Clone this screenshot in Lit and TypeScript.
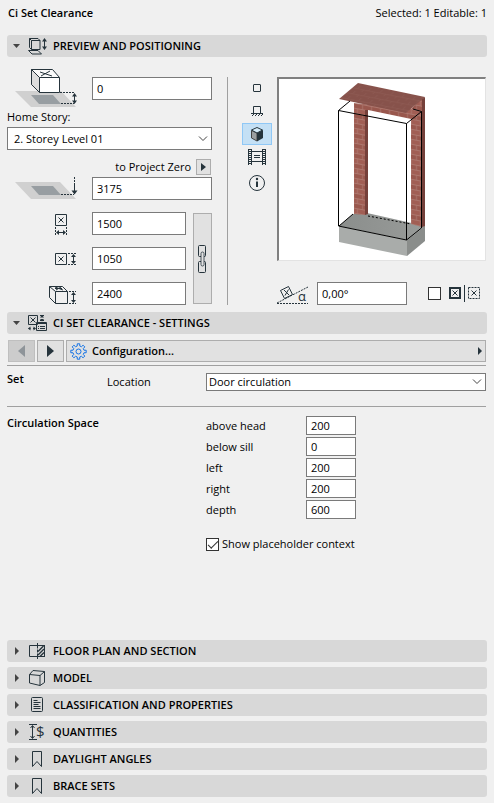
import { LitElement, html, svg, css, TemplateResult } from "lit";
import { customElement, property } from "lit/decorators.js";

/** Outline of a cog wheel: `teeth` teeth between an inner and an outer radius. */
function gearPath(cx: number, cy: number, inner: number, outer: number, teeth: number): string {
  const step = (Math.PI * 2) / teeth;
  const at = (r: number, a: number) =>
    `${(cx + r * Math.cos(a)).toFixed(2)} ${(cy + r * Math.sin(a)).toFixed(2)}`;
  const points: string[] = [];
  for (let i = 0; i < teeth; i++) {
    const a = i * step - Math.PI / 2;
    points.push(at(inner, a - step * 0.3), at(outer, a - step * 0.2));
    points.push(at(outer, a + step * 0.2), at(inner, a + step * 0.3));
  }
  return `M${points.join("L")}Z`;
}

const iconCss = css`
  svg {
    display: block;
    flex: none;
    overflow: visible;
    fill: none;
    stroke: #26343c;
    stroke-width: 1;
  }
  .solid {
    fill: #26343c;
    stroke: none;
  }
  .glyph {
    fill: #26343c;
    stroke: none;
    font-family: "Open Sans", sans-serif;
    font-weight: 400;
  }
  .dash {
    stroke-dasharray: 2 1;
  }
`;

const controlCss = css`
  * {
    box-sizing: border-box;
  }
  input,
  select,
  button {
    font: inherit;
    color: inherit;
    margin: 0;
    border-radius: 0;
  }
  input[type="text"] {
    height: 23px;
    min-width: 0;
    padding: 0 4px;
    border: 1px solid #7a7a7a;
    background: #fff;
  }
  input[type="checkbox"] {
    appearance: none;
    flex: none;
    width: 13px;
    height: 13px;
    border: 1px solid #333;
    background: #fff;
    display: grid;
    place-items: center;
  }
  input[type="checkbox"]:checked::before {
    content: "";
    width: 9px;
    height: 4px;
    border: solid #333;
    border-width: 0 0 1px 1px;
    transform: translateY(-1px) rotate(-45deg);
  }
  .combo {
    display: grid;
    align-items: center;
  }
  .combo > * {
    grid-area: 1 / 1;
  }
  .combo svg {
    justify-self: end;
    margin-right: 4px;
    pointer-events: none;
    stroke: #444;
  }
  select {
    appearance: none;
    width: 100%;
    border: 1px solid #7a7a7a;
    background: #fff;
  }
  button {
    padding: 0;
    border: 1px solid #adadad;
    background: #e1e1e1;
    display: flex;
    align-items: center;
    justify-content: center;
  }
`;

const chevron = html`<svg width="10" height="6" viewBox="0 0 10 6"><path d="M1 .5 5 4.5 9 .5" /></svg>`;

const icons: Record<string, TemplateResult> = {
  preview: svg`
    <path d="M3.5 3.5h8.500v9H3.500zM1.500 1.500h8.500l2 2M1.500 1.500v9l2 2M1.500 1.500l2 2" />
    <path d="M.5 13.500h9.500l3.500 3.500H4z" />
    <path d="M16.500 2v10" /><path class="solid" d="M14 4.500 16.500 1 19 4.500zM14 9.500l2.500 3.500L19 9.500z" />`,
  settings: svg`
    <path d="M.5 1.500h9v9h-9zM2.500 3.500l5 5M7.500 3.500l-5 5" />
    <path d="M12 1.500h4M12 6.500h4M.5 14.500h2M5 14.500h2" stroke-width="1" />
    <path class="solid" d="M12 3.500 14 1l2 2.500zM12 5l2 2.500L16 5zM0 14.500l2.500-2v4zM8 14.500l-2.500-2v4z" />
    <path d="M8.500 8.500h10v8h-10zM8.500 9.500h10M10 12.500h1M12 12.500h5M10 14.500h1M12 14.500h5" />`,
  floor: svg`
    <path d="M9 3.500H1.500v11H9" /><path d="M9.500 3.500v11" stroke-dasharray="3 1" />
    <path d="M9.500 1v3M9.500 14v3" />
    <path class="solid" d="M9 3h8v1H9zM9 14h8v1H9zM16 3h1v12h-1z" />
    <path d="M10 9.500 15.500 4M10 13l6-6M12 14.500l4-4" stroke-width="1.400" />`,
  model: svg`
    <path d="M1.500 5.500 12 6.500v10L1.500 14zM1.500 5.500 5 1.500l11.500 1L12 6.500M16.500 2.500v11L12 16.500" />`,
  classification: svg`
    <rect x="3.500" y="1.500" width="11" height="14" rx="1" />
    <path d="M5.500 4.500h4M5.500 6.500h7M5.500 8.500h5M5.500 10.500h7M5.500 12.500h7" />`,
  quantities: svg`
    <path d="M1 1.500h8M1 16.500h8M4.500 3v12" /><path d="M2.500 5 4.500 2.500l2 2.500M2.500 13l2 2.500 2-2.500" />
    <text class="glyph" x="8" y="14" font-size="15">$</text>`,
  bookmark: svg`<path d="M4.500 1.500h9v15L9 11.500l-4.500 5z" />`,
};

@customElement("panel-section")
export class PanelSection extends LitElement {
  @property() heading = "";
  @property() icon = "";
  @property({ type: Boolean }) open = false;

  static styles = [
    controlCss,
    iconCss,
    css`
      :host {
        display: block;
      }
      h2 {
        margin: 0;
        font: inherit;
      }
      .bar {
        width: 100%;
        height: 22px;
        padding: 0 4px;
        gap: 5px;
        justify-content: flex-start;
        border: 0;
        border-radius: 3px;
        background: #d8d8d8;
        font-weight: 600;
        white-space: nowrap;
      }
      .arrow .solid {
        fill: #444;
      }
    `,
  ];

  render() {
    return html`
      <h2>
        <button class="bar" aria-expanded=${this.open ? "true" : "false"}>
          <svg class="arrow" width="12" height="12" viewBox="0 0 12 12">
            <path class="solid" d=${this.open ? "M2 4h7L5.500 8z" : "M4 2v8l4-4z"} />
          </svg>
          <svg width="20" height="18" viewBox="0 0 20 18">${icons[this.icon]}</svg>
          <span>${this.heading}</span>
        </button>
      </h2>
      ${this.open ? html`<slot></slot>` : null}
    `;
  }
}

@customElement("model-preview")
export class ModelPreview extends LitElement {
  static styles = css`
    :host {
      display: block;
      height: 184px;
      background: #fff;
      border: solid;
      border-width: 2px 1px 1px 2px;
      border-color: #808080 #e3e3e3 #e3e3e3 #808080;
    }
    svg {
      display: block;
      width: 100%;
      height: 100%;
    }
    .edge {
      fill: none;
      stroke: #000;
    }
  `;

  render() {
    return html`
      <svg viewBox="0 0 206 181" role="img" aria-label="Door circulation model">
        <defs>
          <pattern id="brick" width="9" height="10" patternUnits="userSpaceOnUse" patternTransform="skewY(11)">
            <rect width="9" height="10" fill="#a15e54" />
            <rect y="0" width="9" height="4" fill="#99574d" />
            <path d="M0 4.500h9M0 9.500h9M2.500 0v4M6.500 5v4" stroke="#b07f77" stroke-width=".7" />
          </pattern>
          <pattern id="roof" width="11" height="6" patternUnits="userSpaceOnUse" patternTransform="skewY(11) skewX(-40)">
            <rect width="11" height="6" fill="#87524b" />
            <path d="M0 .5h11M3 0v3M8 3v3" stroke="#8f5b54" stroke-width=".6" />
          </pattern>
          <linearGradient id="slab" x2="1"><stop stop-color="#8b8e8c" /><stop offset="1" stop-color="#989b99" /></linearGradient>
        </defs>
        <path fill="url(#brick)" d="M75 24 132 30 144 18V147L132 145V40L89 31V136L75 135z" />
        <path fill="#75403a" d="M86 31l3 0v104l-3 1zM143 20l3-2v130l-3 1z" />
        <path fill="url(#roof)" d="M79 4 146 18 127 34 60 20z" />
        <path fill="url(#slab)" d="M60 147 74 135H88V134L146 147 128 161z" />
        <path fill="url(#brick)" d="M75 120h11v16l-11-1zM132 130h11v18l-11-3z" />
        <path fill="#75403a" d="M86 120h3v15l-3 1zM143 130h3v17l-3 1z" />
        <path fill="#a9acaa" d="M60 147l68 14v16L60 163z" />
        <path fill="#8a8d8b" d="M128 161l18-14v15l-18 15z" />
        <path class="edge" d="M71 22 59.500 31.500 127.500 44.500 142.500 32.500 134 30M59.500 31.500V147L127.500 161V44.500M127.500 161 142.500 149V32.500M60 147 74 135" />
        <path class="edge" stroke-dasharray="2 2" d="M89 137 132 145" />
      </svg>
    `;
  }
}

@customElement("app-root")
export class AppRoot extends LitElement {
  static styles = [
    controlCss,
    iconCss,
    css`
      :host {
        display: flex;
        flex-direction: column;
        min-height: 100vh;
        padding: 0 7px 6px;
        background: #f0f0f0;
        color: #000;
        font: 11px/16px "Open Sans", "Noto Sans", sans-serif;
        box-sizing: border-box;
      }
      .title {
        display: flex;
        justify-content: space-between;
        padding: 5px 0 14px 1px;
      }
      h1,
      h3 {
        margin: 0;
        font: inherit;
        font-weight: 600;
      }

      .preview {
        display: flex;
        padding: 12px 1px 7px 0;
      }
      .placement {
        width: 205px;
        flex: none;
      }
      .field {
        display: flex;
        align-items: center;
      }
      .field input {
        flex: 1;
      }
      .story {
        display: block;
        margin: 1px 0 2px;
      }
      .placement select {
        height: 23px;
        padding: 0 6px;
      }
      .zero {
        display: flex;
        justify-content: flex-end;
        gap: 5px;
        margin: 9px 1px 2px 0;
      }
      .zero button {
        width: 15px;
        height: 16px;
      }
      .size {
        display: flex;
        gap: 7px;
        margin-top: 12px;
      }
      .sizes {
        flex: 1;
        min-width: 0;
        display: flex;
        flex-direction: column;
        gap: 12px;
      }
      .chain {
        width: 19px;
        margin: 1px 0;
      }

      .side {
        flex: 1;
        min-width: 0;
        display: grid;
        grid-template-columns: 30px 1fr;
        column-gap: 5px;
        margin: 8px 0 0 15px;
        padding-left: 14px;
        border-left: 1px solid #a0a0a0;
        align-content: space-between;
      }
      .modes {
        display: flex;
        flex-direction: column;
        gap: 1px;
      }
      .modes button {
        height: 22px;
        border-color: transparent;
        background: none;
      }
      .modes .on {
        border-color: #90c8f6;
        background: #c4e0f5;
      }
      .modes .info {
        height: 28px;
      }
      .angle {
        grid-column: 2;
        display: flex;
        align-items: center;
      }
      .angle input[type="text"] {
        width: 90px;
        margin: 0 auto 0 9px;
      }
      .mirror {
        display: flex;
        align-items: center;
        gap: 8px;
        padding-right: 4px;
      }

      .tools {
        display: flex;
        gap: 2px;
        padding: 6px 1px 3px;
      }
      .tools button {
        width: 27px;
        height: 22px;
      }
      .tools .off {
        background: #ccc;
        border-color: #bfbfbf;
      }
      .tools .config {
        flex: 1;
        justify-content: flex-start;
        gap: 5px;
        padding: 0 3px;
        font-weight: 600;
      }
      .config .end {
        margin-left: auto;
      }
      .gear {
        stroke: #1473e6;
      }
      .row {
        display: grid;
        grid-template-columns: 100px 99px 1fr;
        margin-right: 1px;
        padding: 6px 0 14px;
        border-top: 1px solid #a0a0a0;
      }
      h3 {
        line-height: 14px;
      }
      .row .combo select {
        height: 18px;
        padding: 0 2px;
      }
      .location {
        line-height: 20px;
      }
      .space {
        padding: 9px 0 88px;
      }
      .space h3 {
        grid-column: span 2;
      }
      .values {
        display: grid;
        grid-template-columns: 100px 50px;
        row-gap: 2px;
        align-items: center;
      }
      .values input[type="text"] {
        height: 19px;
        width: 50px;
      }
      .context {
        grid-column: 3;
        display: flex;
        align-items: center;
        gap: 3px;
        margin-top: 17px;
      }
      .rest {
        display: grid;
        gap: 5px;
      }
    `,
  ];

  private placementPanel() {
    return html`
      <div class="placement">
        <div class="field">
          <svg width="85" height="39" viewBox="0 0 85 39">
            <path d="M8 22h46l15 16H24z" fill="#d0d0d0" stroke="none" />
            <path d="M24 26h22l8 9H32z" fill="#989ea2" stroke="none" />
            <path d="M24.500.5h21l7 8h-20zM32.500 8.500v15l-8-8V.5z" fill="#fafafa" />
            <path d="M24.500.5l8 8v15l-8-8z" fill="#ddd" />
            <path d="M32.500 8.500h20v15h-20z" fill="#fff" />
            <path d="M33 3l12 4M43 2 34 7" />
            <path class="dash" d="M53 23.500h14M54 34.500h13" />
            <path d="M67.500 26v7" />
            <path class="solid" d="M65 27.500 67.500 24l2.500 3.500zM65 31.500l2.500 3.500 2.500-3.500z" />
          </svg>
          <input type="text" aria-label="Elevation to home story" value="0" />
        </div>
        <label class="story" for="story">Home Story:</label>
        <div class="combo">
          <select id="story"><option>2. Storey Level 01</option></select>
          ${chevron}
        </div>
        <div class="zero">
          <label for="zero">to Project Zero</label>
          <button aria-label="Choose reference level">
            <svg width="5" height="8" viewBox="0 0 5 8"><path class="solid" d="M0 0v8l5-4z" /></svg>
          </button>
        </div>
        <div class="field">
          <svg width="85" height="23" viewBox="0 0 85 23">
            <path d="M8 5h45l16 17H24z" fill="#d0d0d0" stroke="none" />
            <path d="M24 9h22l8 9H32z" fill="#989ea2" stroke="none" />
            <path class="dash" d="M54 17.500h13M67.500 0v7" />
            <path d="M67.500 7v8" />
            <path class="solid" d="M64.500 13.500l3 4 3-4z" />
          </svg>
          <input id="zero" type="text" value="3175" />
        </div>
        <div class="size">
          <div class="sizes">
            <div class="field">
              <svg width="85" height="23" viewBox="0 0 85 23">
                <path d="M48.500 2.500h11v11h-11zM51.500 5.500l5 5M56.500 5.500l-5 5M50 20.500h8" />
                <path class="dash" d="M48.500 15v8M59.500 15v8" />
                <path class="solid" d="M49 20.500l3-2.500v5zM59 20.500 56 18v5z" />
              </svg>
              <input type="text" aria-label="Width" value="1500" />
            </div>
            <div class="field">
              <svg width="85" height="23" viewBox="0 0 85 23">
                <path d="M48.500 6.500h11v11h-11zM51.500 9.500l5 5M56.500 9.500l-5 5M66.500 8v8" />
                <path class="dash" d="M61 6.500h8M61 17.500h8" />
                <path class="solid" d="M66.500 7 64 10h5zM66.500 17 64 14h5z" />
              </svg>
              <input type="text" aria-label="Height" value="1050" />
            </div>
            <div class="field">
              <svg width="85" height="23" viewBox="0 0 85 23">
                <path d="M48.500 9.500h12v12h-12zM42.500 4.500h13l5 5M42.500 4.500v11l6 6M42.500 4.500l6 5" />
                <path d="M48 6.500h7M48 5l8 3M54 5l-5 3" />
                <path d="M66.500 11v9" />
                <path class="dash" d="M62 9.500h7M62 21.500h7" />
                <path class="solid" d="M66.500 10 64 13h5zM66.500 21 64 18h5z" />
              </svg>
              <input type="text" aria-label="Depth" value="2400" />
            </div>
          </div>
          <button class="chain" aria-label="Keep proportions">
            <svg width="9" height="28" viewBox="0 0 9 28">
              <path d="M3 11.500H1.500a1 1 0 0 1-1-1v-9a1 1 0 0 1 1-1h5a1 1 0 0 1 1 1v9a1 1 0 0 1-1 1H6" />
              <path d="M3 16.500H1.500a1 1 0 0 0-1 1v9a1 1 0 0 0 1 1h5a1 1 0 0 0 1-1v-9a1 1 0 0 0-1-1H6" />
              <path d="M3 8.500a1.500 1.500 0 0 1 3 0v11a1.500 1.500 0 0 1-3 0z" stroke-width=".8" />
            </svg>
          </button>
        </div>
      </div>
    `;
  }

  private viewPanel() {
    return html`
      <div class="side">
        <div class="modes">
          <button aria-label="2D symbol">
            <svg width="18" height="18" viewBox="0 0 18 18"><rect x="5.500" y="5.500" width="7" height="7" rx=".5" /></svg>
          </button>
          <button aria-label="Front view">
            <svg width="18" height="18" viewBox="0 0 18 18">
              <path d="M5.500 12V4.500h7V12M3 11.500h12M4 14l2-2M7 14l2-2M10 14l2-2M13 14l2-2" />
            </svg>
          </button>
          <button class="on" aria-label="3D view" aria-pressed="true">
            <svg width="18" height="18" viewBox="0 0 18 18">
              <path d="M3.500 5.500 9 8v8l-5.500-3z" fill="#9b9fa1" stroke="#444" />
              <path d="M3.500 5 9 2.500 14.500 5 9 8z" fill="#d5ecfa" stroke="#26343c" />
              <path class="solid" d="M9 8l6-3v8l-6 3.500z" />
            </svg>
          </button>
          <button aria-label="Preview picture">
            <svg width="18" height="18" viewBox="0 0 18 18">
              <path d="M1.500 1v16M16.500 1v16" stroke-width="3" stroke-dasharray="1 1" />
              <path d="M3.500 1v16M14.500 1v16M.5 1v16M17.500 1v16M4 3.500h10M4 13.500h10M6 7.500h6M6 9.500h6" />
            </svg>
          </button>
          <button class="info" aria-label="Info">
            <svg width="18" height="18" viewBox="0 0 18 18">
              <circle cx="9" cy="9" r="7.500" />
              <path d="M9 7.500v5.500" stroke-width="2" /><circle class="solid" cx="9" cy="5" r="1.200" />
            </svg>
          </button>
        </div>
        <model-preview></model-preview>
        <div class="angle">
          <svg width="31" height="23" viewBox="0 0 31 23">
            <path class="dash" stroke-dasharray="3 1" d="M0 21.500h31M0 21 31 5" />
            <path d="M3.500 8.500 11.500 4.500 15.500 12.500 7.500 16.500zM7 8l5 5M11.500 7.500 8 13.500" fill="#f0f0f0" />
            <text class="glyph" x="21" y="19" font-size="13">α</text>
          </svg>
          <input type="text" aria-label="Rotation angle" value="0,00°" />
          <label class="mirror">
            <input type="checkbox" aria-label="Mirrored" />
            <svg width="33" height="17" viewBox="0 0 33 17">
              <path d="M1 3h10v10H1z" stroke-width="2" />
              <path d="M3.500 5.500l5 5M8.500 5.500l-5 5M15.500 0v17" />
              <path stroke-dasharray="2 1" d="M19.500 2.500h11v11h-11z" /><path d="M22.500 5.500l5 5M27.500 5.500l-5 5" />
            </svg>
          </label>
        </div>
      </div>
    `;
  }

  private settingsPanel() {
    const values: [string, string, string][] = [
      ["head", "above head", "200"],
      ["sill", "below sill", "0"],
      ["left", "left", "200"],
      ["right", "right", "200"],
      ["depth", "depth", "600"],
    ];
    return html`
      <div class="tools">
        <button class="off" disabled aria-label="Previous page">
          <svg width="7" height="12" viewBox="0 0 7 12"><path d="M7 0v12L0 6z" fill="#8e9499" stroke="none" /></svg>
        </button>
        <button aria-label="Next page">
          <svg width="7" height="12" viewBox="0 0 7 12"><path class="solid" d="M0 0v12l7-6z" /></svg>
        </button>
        <button class="config">
          <svg class="gear" width="17" height="17" viewBox="0 0 17 17">
            <path d=${gearPath(8.5, 8.5, 5.6, 7.8, 8)} /><circle cx="8.500" cy="8.500" r="2.500" />
          </svg>
          <span>Configuration...</span>
          <svg class="end" width="4" height="8" viewBox="0 0 4 8"><path class="solid" d="M0 0v8l4-4z" /></svg>
        </button>
      </div>
      <div class="row">
        <h3>Set</h3>
        <label class="location" for="location">Location</label>
        <div class="combo">
          <select id="location"><option>Door circulation</option></select>
          ${chevron}
        </div>
      </div>
      <div class="row space">
        <h3>Circulation Space</h3>
        <div class="values">
          ${values.map(
            ([id, label, value]) => html`
              <label for=${id}>${label}</label>
              <input id=${id} type="text" value=${value} />
            `
          )}
        </div>
        <label class="context"><input type="checkbox" checked />Show placeholder context</label>
      </div>
    `;
  }

  render() {
    const closed: [string, string][] = [
      ["FLOOR PLAN AND SECTION", "floor"],
      ["MODEL", "model"],
      ["CLASSIFICATION AND PROPERTIES", "classification"],
      ["QUANTITIES", "quantities"],
      ["DAYLIGHT ANGLES", "bookmark"],
      ["BRACE SETS", "bookmark"],
    ];
    return html`
      <header class="title">
        <h1>Ci Set Clearance</h1>
        <span>Selected: 1 Editable: 1</span>
      </header>
      <panel-section heading="PREVIEW AND POSITIONING" icon="preview" open>
        <div class="preview">${this.placementPanel()} ${this.viewPanel()}</div>
      </panel-section>
      <panel-section heading="CI SET CLEARANCE - SETTINGS" icon="settings" open>
        ${this.settingsPanel()}
      </panel-section>
      <div class="rest">
        ${closed.map(([heading, icon]) => html`<panel-section heading=${heading} icon=${icon}></panel-section>`)}
      </div>
    `;
  }
}
